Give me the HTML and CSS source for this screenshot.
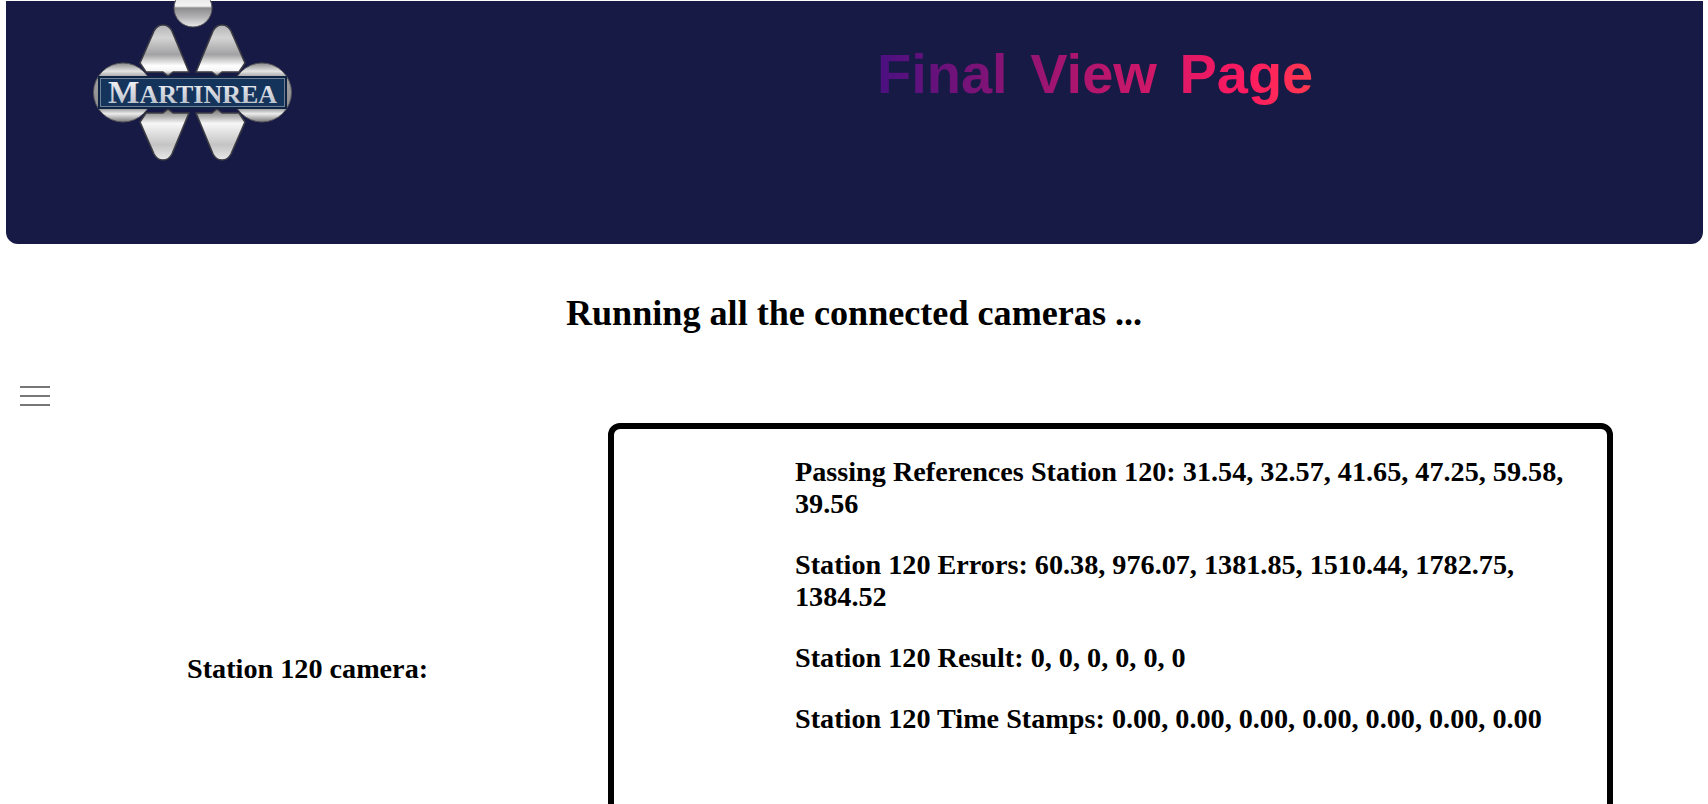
FILE: index.html
```html
<!DOCTYPE html>
<html lang="en">
<head>
<meta charset="utf-8">
<title>Final View Page</title>
<link rel="stylesheet" href="styles.css">
</head>
<body>
<header class="banner">
  <svg class="logo" viewBox="0 0 204 165" aria-label="Martinrea logo">
    <defs>
      <linearGradient id="chromeUp" x1="0" y1="0" x2="0" y2="1">
        <stop offset="0" stop-color="#b4b4b6"/>
        <stop offset="0.25" stop-color="#d4d4d4"/>
        <stop offset="0.58" stop-color="#a2a2a4"/>
        <stop offset="0.8" stop-color="#ffffff"/>
        <stop offset="0.9" stop-color="#f4f4f4"/>
        <stop offset="1" stop-color="#77777a"/>
      </linearGradient>
      <linearGradient id="chromeDown" x1="0" y1="0" x2="0" y2="1">
        <stop offset="0" stop-color="#77777a"/>
        <stop offset="0.16" stop-color="#b8b8b8"/>
        <stop offset="0.28" stop-color="#f7f7f7"/>
        <stop offset="0.7" stop-color="#c4c4c4"/>
        <stop offset="1" stop-color="#e8e8e8"/>
      </linearGradient>
      <linearGradient id="chromeBall" x1="0" y1="0" x2="0" y2="1">
        <stop offset="0" stop-color="#d8d8d8"/>
        <stop offset="0.45" stop-color="#f4f4f4"/>
        <stop offset="0.5" stop-color="#8c8c8e"/>
        <stop offset="0.75" stop-color="#b4b4b6"/>
        <stop offset="1" stop-color="#ececec"/>
      </linearGradient>
      <linearGradient id="chromeRound" x1="0" y1="0" x2="0" y2="1">
        <stop offset="0" stop-color="#8a8a8c"/>
        <stop offset="0.14" stop-color="#e4e4e4"/>
        <stop offset="0.24" stop-color="#a0a0a2"/>
        <stop offset="0.76" stop-color="#8e8e90"/>
        <stop offset="0.86" stop-color="#ececec"/>
        <stop offset="1" stop-color="#7a7a7c"/>
      </linearGradient>
      <linearGradient id="wordFill" x1="0" y1="0" x2="0" y2="1">
        <stop offset="0" stop-color="#ffffff"/>
        <stop offset="1" stop-color="#aeb5c1"/>
      </linearGradient>
    </defs>
    <circle class="ball" cx="100" cy="8" r="19" fill="url(#chromeBall)"/>
    <circle class="ball" cx="30" cy="92.5" r="29.5" fill="url(#chromeRound)"/>
    <circle class="ball" cx="169" cy="92.5" r="29.5" fill="url(#chromeRound)"/>
    <path class="wing" d="M70 25c-5 0-7 2-9 6L47 63l6 9h17l5 4 5-4h16L79 31c-2-4-4-6-9-6z" fill="url(#chromeUp)"/>
    <path class="wing" d="M129 25c-5 0-7 2-9 6L103 72h16l5 4 5-4h17l6-9-14-32c-2-4-4-6-9-6z" fill="url(#chromeUp)"/>
    <path class="wing" d="M47 122l6-9h17l5-4 5 4h16L79 154c-2 4-5 6-9 6s-7-2-9-6z" fill="url(#chromeDown)"/>
    <path class="wing" d="M152 122l-6-9h-17l-5-4-5 4h-16l17 41c2 4 5 6 9 6s7-2 9-6z" fill="url(#chromeDown)"/>
    <rect class="plate-edge" x="5" y="76" width="189" height="33"/>
    <rect class="plate" x="7.5" y="78.5" width="184" height="28"/>
    <text class="logo-word" x="99.5" y="103" textLength="169" lengthAdjust="spacingAndGlyphs" fill="url(#wordFill)"><tspan class="logo-cap">M</tspan>ARTINREA</text>
  </svg>
  <h1 class="title">Final View Page</h1>
</header>
<h2 class="status">Running all the connected cameras ...</h2>
<button class="menu" type="button" aria-label="Menu"><span></span><span></span><span></span></button>
<main class="station">
  <div class="station-label">Station 120 camera:</div>
  <section class="panel">
    <p>Passing References Station 120: 31.54, 32.57, 41.65, 47.25, 59.58, 39.56</p>
    <p>Station 120 Errors: 60.38, 976.07, 1381.85, 1510.44, 1782.75, 1384.52</p>
    <p>Station 120 Result: 0, 0, 0, 0, 0, 0</p>
    <p>Station 120 Time Stamps: 0.00, 0.00, 0.00, 0.00, 0.00, 0.00, 0.00</p>
  </section>
</main>
</body>
</html>
```
FILE: styles.css
```css
html, body {
  margin: 0;
  background: #fff;
  color: #000;
  font-family: "Liberation Serif", "Times New Roman", serif;
}
body {
  overflow-x: hidden;
}
.banner {
  box-sizing: border-box;
  height: 243px;
  margin: 1px 5px 0 6px;
  padding-left: 87px;
  display: flex;
  align-items: flex-start;
  background: #161a44;
  border-radius: 0 0 12px 12px;
}
.logo {
  width: 204px;
  height: 165px;
  flex: none;
  margin-top: -1px;
}
.ball {
  stroke: #55555a;
  stroke-width: 1;
}
.wing {
  stroke: #3c3c44;
  stroke-width: 1.6;
  stroke-linejoin: round;
}
.plate-edge {
  fill: #0f2444;
}
.plate {
  fill: #15345c;
  stroke: #6f7f96;
  stroke-width: 1;
}
.logo-word {
  font-family: "Liberation Serif", serif;
  font-weight: 700;
  font-size: 25px;
  text-anchor: middle;
}
.logo-cap {
  font-size: 32px;
}
.title {
  margin: 38px 0 0 580px;
  font-family: "Liberation Sans", Arial, sans-serif;
  font-size: 56px;
  line-height: 70px;
  font-weight: 700;
  word-spacing: 7px;
  background: linear-gradient(90deg, #4a1080, #ff1a60 85%, #ff3a50);
  -webkit-background-clip: text;
  background-clip: text;
  color: transparent;
}
.status {
  margin: 49px 0 0;
  text-align: center;
  font-size: 36.15px;
  line-height: 40px;
  font-weight: 700;
}
.menu {
  display: flex;
  flex-direction: column;
  gap: 7px;
  width: 30px;
  margin: 53px 0 0 20px;
  padding: 0;
  border: 0;
  background: none;
}
.menu span {
  width: 30px;
  height: 2px;
  background: #777;
}
.station {
  display: flex;
  align-items: center;
  margin-top: 17px;
}
.station-label {
  width: 608px;
  flex: none;
  box-sizing: border-box;
  padding-left: 187px;
  font-size: 28.2px;
  font-weight: 700;
}
.panel {
  box-sizing: border-box;
  width: 1005px;
  height: 492px;
  padding: 27px 30px 0 181px;
  border: 6px solid #000;
  border-radius: 12px;
  font-size: 28.2px;
  line-height: 32.3px;
  font-weight: 700;
}
.panel p {
  margin: 0 0 28.6px;
}
```
